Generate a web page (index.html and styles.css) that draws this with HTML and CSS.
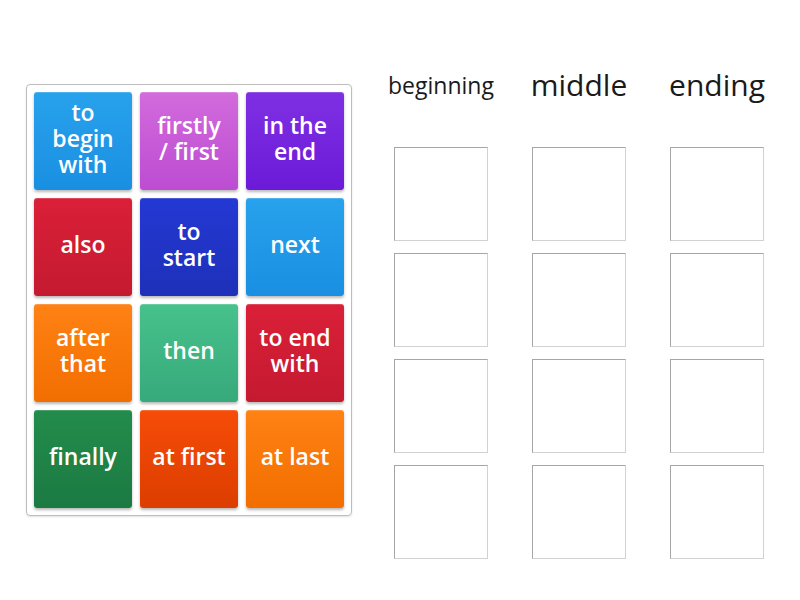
FILE: index.html
```html
<!DOCTYPE html>
<html lang="en">
<head>
<meta charset="utf-8">
<title>Group sort</title>
<link rel="stylesheet" href="styles.css">
</head>
<body>
<div class="page">
  <div class="board">
    <div class="tile c-blue"><span>to begin with</span></div>
    <div class="tile c-orchid"><span>firstly / first</span></div>
    <div class="tile c-purple"><span>in the end</span></div>
    <div class="tile c-red"><span>also</span></div>
    <div class="tile c-navy"><span>to start</span></div>
    <div class="tile c-blue"><span>next</span></div>
    <div class="tile c-orange"><span>after that</span></div>
    <div class="tile c-green"><span>then</span></div>
    <div class="tile c-red"><span>to end with</span></div>
    <div class="tile c-dgreen"><span>finally</span></div>
    <div class="tile c-redorange"><span>at first</span></div>
    <div class="tile c-orange"><span>at last</span></div>
  </div>
  <div class="sorter">
    <div class="group">
      <div class="group-title"><span class="title-small">beginning</span></div>
      <div class="slots">
        <div class="slot"></div><div class="slot"></div><div class="slot"></div><div class="slot"></div>
      </div>
    </div>
    <div class="group">
      <div class="group-title"><span class="title-large">middle</span></div>
      <div class="slots">
        <div class="slot"></div><div class="slot"></div><div class="slot"></div><div class="slot"></div>
      </div>
    </div>
    <div class="group">
      <div class="group-title"><span class="title-large">ending</span></div>
      <div class="slots">
        <div class="slot"></div><div class="slot"></div><div class="slot"></div><div class="slot"></div>
      </div>
    </div>
  </div>
</div>
</body>
</html>
```

FILE: styles.css
```css
html, body {
  margin: 0;
  padding: 0;
  background: #ffffff;
  font-family: "Open Sans", "Noto Sans", sans-serif;
}

.page {
  display: flex;
  align-items: flex-start;
  padding-left: 26px;
}

.board {
  margin-top: 84px;
  box-sizing: border-box;
  width: 326px;
  padding: 7px;
  border: 1px solid #bdbdbd;
  border-radius: 4px;
  box-shadow: 0 1px 2px rgba(0, 0, 0, 0.12);
  display: grid;
  grid-template-columns: repeat(3, 98px);
  grid-auto-rows: 98px;
  gap: 8px;
}

.tile {
  box-sizing: border-box;
  border-radius: 3px;
  display: flex;
  align-items: center;
  justify-content: center;
  text-align: center;
  padding: 0 10px 6px;
  color: #ffffff;
  font-weight: 600;
  font-size: 23px;
  line-height: 26px;
  box-shadow: 0 2px 3px rgba(0, 0, 0, 0.28), inset 0 1px 0 rgba(255, 255, 255, 0.18);
}

.c-blue { background: linear-gradient(#28a2ec, #1a8fe2); }
.c-orchid { background: linear-gradient(#d26bdc, #bd4cd2); }
.c-purple { background: linear-gradient(#7f2fe2, #6b1bd8); }
.c-red { background: linear-gradient(#da2038, #c41a30); }
.c-navy { background: linear-gradient(#2438d4, #1e30b8); }
.c-orange { background: linear-gradient(#ff8214, #f26e00); }
.c-green { background: linear-gradient(#47c28c, #37a97b); }
.c-dgreen { background: linear-gradient(#238c4c, #1b7a42); }
.c-redorange { background: linear-gradient(#f64c08, #dc3e00); }

.sorter {
  margin-left: 42px;
  margin-top: 60px;
  display: flex;
  gap: 44px;
}

.group {
  width: 94px;
  display: flex;
  flex-direction: column;
}

.group-title {
  height: 50px;
  display: flex;
  align-items: center;
  justify-content: center;
  white-space: nowrap;
  color: #1a1a1a;
  font-weight: 400;
}

.title-small {
  font-size: 23px;
  line-height: 1;
}

.title-large {
  font-size: 30px;
  line-height: 1;
}

.slots {
  margin-top: 37px;
  display: flex;
  flex-direction: column;
  gap: 12px;
}

.slot {
  box-sizing: border-box;
  width: 94px;
  height: 94px;
  border: 1px solid;
  border-color: #a6a6a6 #d2d2d2 #d2d2d2 #a6a6a6;
  background: #ffffff;
}
```
